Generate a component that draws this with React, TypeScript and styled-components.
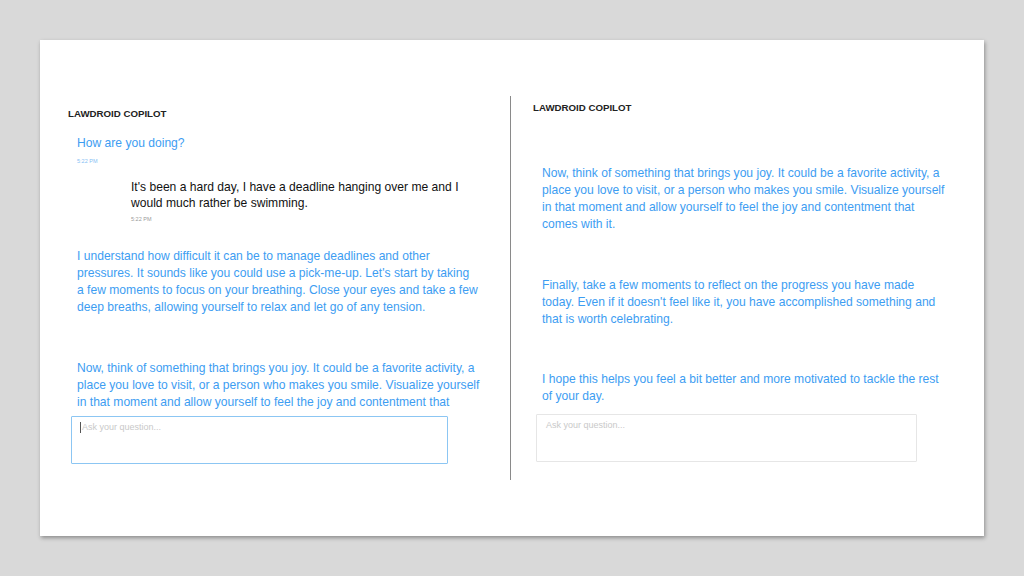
import styled, { createGlobalStyle } from "styled-components";

const GlobalStyle = createGlobalStyle`
  html, body {
    margin: 0;
    padding: 0;
    background: #d9d9d9;
    font-family: "Liberation Sans", Arial, sans-serif;
  }
`;

const Stage = styled.div`
  width: 1024px;
  height: 576px;
  padding: 40px;
  box-sizing: border-box;
`;

const Slide = styled.div`
  height: 100%;
  background: #ffffff;
  box-shadow: 1px 2px 4px rgba(0, 0, 0, 0.35);
  padding: 56px 0;
  box-sizing: border-box;
  display: grid;
  grid-template-columns: 470px 1fr;
`;

const Panel = styled.section<{ $divided?: boolean; $top: number; $left: number; $bottom: number }>`
  display: flex;
  flex-direction: column;
  min-height: 0;
  padding: ${({ $top, $left, $bottom }) => `${$top}px 0 ${$bottom}px ${$left}px`};
  border-left: ${({ $divided }) => ($divided ? "1px solid #8a8a8a" : "none")};
`;

const Title = styled.h2`
  margin: 0;
  font-size: 9.7px;
  line-height: 11px;
  font-weight: 700;
  color: #222;
`;

const Thread = styled.div<{ $toBottom?: boolean; $gapTop: number }>`
  flex: 1;
  min-height: 0;
  overflow: hidden;
  margin: ${({ $gapTop }) => $gapTop}px 0 0 3px;
  padding-top: ${({ $toBottom }) => ($toBottom ? 0 : 16)}px;
  display: flex;
  flex-direction: column;
  justify-content: ${({ $toBottom }) => ($toBottom ? "flex-end" : "flex-start")};
`;

const Message = styled.div<{ $user?: boolean }>`
  flex-shrink: 0;
  width: ${({ $user }) => ($user ? 360 : 425)}px;
  padding-left: ${({ $user }) => ($user ? 60 : 6)}px;
  margin-bottom: ${({ $user }) => ($user ? 25 : 14)}px;
  &:last-child {
    margin-bottom: 0;
  }
`;

const Para = styled.p<{ $user?: boolean }>`
  margin: 0 0 43.5px;
  font-size: 12.1px;
  line-height: ${({ $user }) => ($user ? 16 : 17)}px;
  white-space: pre-line;
  color: ${({ $user }) => ($user ? "#111" : "#3d9df2")};
  &:last-of-type {
    margin-bottom: 0;
  }
`;

const Stamp = styled.div<{ $user?: boolean }>`
  margin-top: ${({ $user }) => ($user ? 4 : 5)}px;
  font-size: 5.5px;
  line-height: 8px;
  color: ${({ $user }) => ($user ? "#9a9a9a" : "#86c0f4")};
`;

const InputBox = styled.div<{ $focused?: boolean; $width: number; $gap: number }>`
  flex-shrink: 0;
  width: ${({ $width }) => $width}px;
  height: 48px;
  margin: ${({ $gap }) => $gap}px 0 0 3px;
  box-sizing: border-box;
  border: 1px solid ${({ $focused }) => ($focused ? "#8cc6f3" : "#e6e6e6")};
  border-radius: 1px;
  padding: 5px ${({ $focused }) => ($focused ? 8 : 9)}px;
  display: flex;
  align-items: flex-start;
`;

const Caret = styled.span`
  width: 1px;
  height: 11px;
  margin-right: 1px;
  background: #555;
`;

const Placeholder = styled.span`
  font-size: 9px;
  line-height: 10px;
  color: #c9c9c9;
`;

// line breaks follow the reference's wrapping
const botReply = [
  "I understand how difficult it can be to manage deadlines and other\npressures. It sounds like you could use a pick-me-up. Let's start by taking\na few moments to focus on your breathing. Close your eyes and take a few\ndeep breaths, allowing yourself to relax and let go of any tension.",
  "Now, think of something that brings you joy. It could be a favorite activity, a\nplace you love to visit, or a person who makes you smile. Visualize yourself\nin that moment and allow yourself to feel the joy and contentment that\ncomes with it.",
  "Finally, take a few moments to reflect on the progress you have made\ntoday. Even if it doesn't feel like it, you have accomplished something and\nthat is worth celebrating.",
  "I hope this helps you feel a bit better and more motivated to tackle the rest\nof your day.",
];

function Conversation() {
  return (
    <>
      <Message>
        <Para>How are you doing?</Para>
        <Stamp>5:22 PM</Stamp>
      </Message>
      <Message $user>
        <Para $user>{"It's been a hard day, I have a deadline hanging over me and I\nwould much rather be swimming."}</Para>
        <Stamp $user>5:22 PM</Stamp>
      </Message>
      <Message>
        {botReply.map((p) => (
          <Para key={p.slice(0, 12)}>{p}</Para>
        ))}
      </Message>
    </>
  );
}

export default function App() {
  return (
    <>
      <GlobalStyle />
      <Stage>
        <Slide>
          <Panel $top={12} $left={28} $bottom={16}>
            <Title>LAWDROID COPILOT</Title>
            <Thread $gapTop={0}>
              <Conversation />
            </Thread>
            <InputBox $focused $width={377} $gap={6}>
              <Caret />
              <Placeholder>Ask your question...</Placeholder>
            </InputBox>
          </Panel>
          <Panel $divided $top={6} $left={22} $bottom={18}>
            <Title>LAWDROID COPILOT</Title>
            <Thread $toBottom $gapTop={8}>
              <Conversation />
            </Thread>
            <InputBox $width={381} $gap={9}>
              <Placeholder>Ask your question...</Placeholder>
            </InputBox>
          </Panel>
        </Slide>
      </Stage>
    </>
  );
}
